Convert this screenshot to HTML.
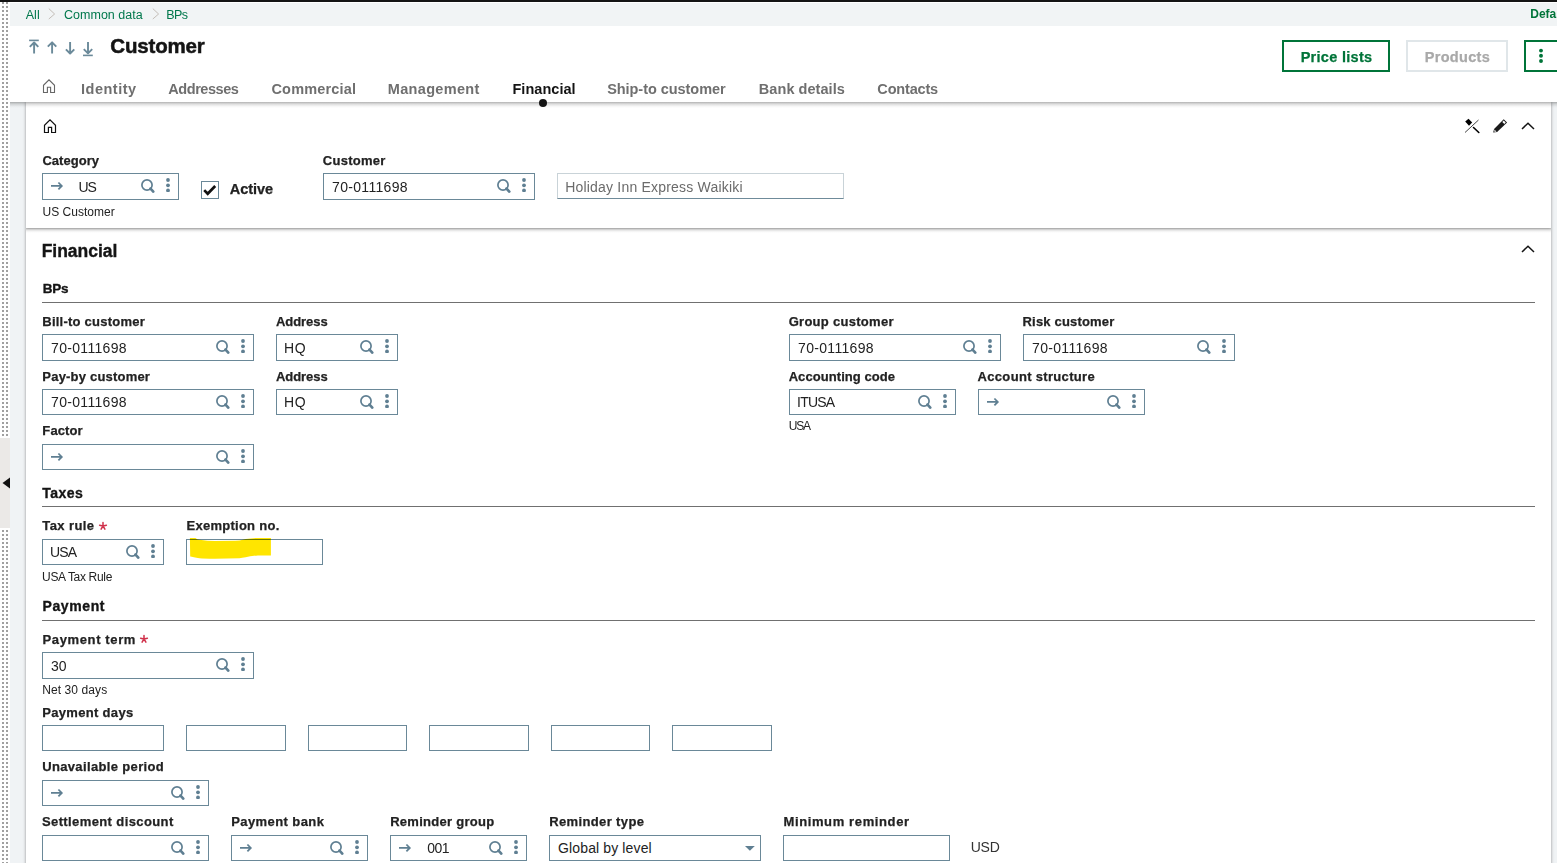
<!DOCTYPE html>
<html><head><meta charset="utf-8">
<style>
*{box-sizing:border-box;margin:0;padding:0}
html,body{width:1557px;height:863px;overflow:hidden;background:#fff;font-family:"Liberation Sans",sans-serif;color:#222}
.a{position:absolute}
.t{position:absolute;line-height:1;white-space:nowrap}
.box{position:absolute;border:1px solid #6a8898;background:#fff}
svg{position:absolute;overflow:visible}
</style></head><body>
<svg width="0" height="0" style="position:absolute">
<defs>
<symbol id="srch" viewBox="0 0 16 16"><circle cx="6" cy="6" r="5.1" fill="none" stroke="#5f7f92" stroke-width="1.7"/><path d="M9.5 9.6 L12.3 12.6" stroke="#5f7f92" stroke-width="2.7" stroke-linecap="round"/></symbol>
<symbol id="keb" viewBox="0 0 4 14"><circle cx="2" cy="2" r="1.9" fill="#5f7f92"/><circle cx="2" cy="7.3" r="1.9" fill="#5f7f92"/><circle cx="2" cy="12.4" r="1.9" fill="#5f7f92"/></symbol>
<symbol id="arr" viewBox="0 0 14 10"><path d="M0 4.9 H10.6 M7.4 1.5 L10.8 4.9 L7.4 8.3" fill="none" stroke="#5f7f92" stroke-width="1.75"/></symbol>
</defs></svg>
<div class="a" style="left:0;top:0;width:1557px;height:2px;background:#141414"></div>
<div class="a" style="left:1px;top:1px;width:8px;height:862px;background-image:radial-gradient(circle at 2px 2px,#a0a0a0 1px,transparent 1.3px);background-size:4px 4px;background-position:0 0"></div>
<div class="a" style="left:10px;top:3px;width:1547px;height:23px;background:#f1f4f5"></div>
<div class="t" style="left:25.65px;top:9.32px;font-size:12.5px;color:#00784c;letter-spacing:0.143px;">All</div>
<div class="t" style="left:64.05px;top:9.32px;font-size:12.5px;color:#00784c;letter-spacing:0.014px;">Common data</div>
<div class="t" style="left:166.15px;top:9.32px;font-size:12.5px;color:#00784c;letter-spacing:-0.537px;">BPs</div>
<div class="t" style="left:1530.25px;top:7.74px;font-size:12px;font-weight:bold;color:#007439;">Default</div>
<svg style="left:48px;top:8px" width="8" height="12"><path d="M0.8 0.6 L6.6 6 L0.8 11" fill="none" stroke="#c4beb8" stroke-width="1"/></svg>
<svg style="left:152px;top:8px" width="8" height="12"><path d="M0.8 0.6 L6.6 6 L0.8 11" fill="none" stroke="#c4beb8" stroke-width="1"/></svg>
<div class="a" style="left:10px;top:102px;width:1547px;height:761px;background:#f0f3f5"></div>
<div class="a" style="left:26px;top:228px;width:1525px;height:700px;background:#fff;box-shadow:0 0 3px rgba(0,0,0,.4)"></div>
<div class="a" style="left:26px;top:102px;width:1525px;height:126px;background:#fff;box-shadow:0 0 3px rgba(0,0,0,.4)"></div>
<div class="a" style="left:26px;top:228px;width:1525px;height:5px;background:linear-gradient(rgba(0,0,0,.22),rgba(0,0,0,.09) 40%,rgba(0,0,0,.02) 80%,rgba(0,0,0,0))"></div>
<div class="a" style="left:10px;top:26px;width:1547px;height:76px;background:#fff"></div>
<div class="a" style="left:10px;top:102px;width:1547px;height:6px;background:linear-gradient(rgba(0,0,0,.30),rgba(0,0,0,.13) 35%,rgba(0,0,0,.03) 75%,rgba(0,0,0,0))"></div>
<svg style="left:26px;top:36px" width="70" height="22" viewBox="0 0 70 22">
<g fill="none" stroke="#6b8a9a" stroke-width="1.9" stroke-linejoin="round">
<path d="M3.1 4.4 H12.8" stroke-width="1.6"/><path d="M8.1 6.6 V17.5 M3.8 10.8 L8.1 6.5 L12.3 10.8"/>
<path d="M26.1 6.3 V17.5 M21.8 10.6 L26.1 6.3 L30.3 10.6"/>
<path d="M44.1 6 V17.5 M39.9 13.3 L44.1 17.5 L48.3 13.3"/>
<path d="M62 6 V17.3 M57.8 13.1 L62 17.3 L66.2 13.1"/><path d="M57 19.4 H66.8" stroke-width="1.6"/>
</g></svg>
<div class="t" style="left:110.35px;top:36.05px;font-size:20.5px;font-weight:bold;color:#141414;letter-spacing:-0.172px;-webkit-text-stroke:0.5px #141414;">Customer</div>
<div class="a" style="left:1282px;top:40px;width:108px;height:32px;border:2px solid #007439"></div>
<div class="t" style="left:1300.65px;top:49.93px;font-size:14.5px;font-weight:bold;color:#007439;letter-spacing:0.295px;-webkit-text-stroke:0.25px #007439;">Price lists</div>
<div class="a" style="left:1406px;top:40px;width:102px;height:32px;border:2px solid #e0e6e9"></div>
<div class="t" style="left:1424.75px;top:49.93px;font-size:14.5px;font-weight:bold;color:#a9a9a9;letter-spacing:0.317px;-webkit-text-stroke:0.25px #a9a9a9;">Products</div>
<div class="a" style="left:1524px;top:40px;width:40px;height:32px;border:2px solid #007439"></div>
<svg style="left:1539px;top:46px" width="4" height="20" viewBox="0 0 4 20"><circle cx="2" cy="4.6" r="1.95" fill="#007439"/><circle cx="2" cy="9.8" r="1.95" fill="#007439"/><circle cx="2" cy="15" r="1.95" fill="#007439"/></svg>
<svg style="left:42px;top:78px" width="14" height="16" viewBox="0 0 14 16"><path d="M1.5 14.5 V7.3 L7 1.8 L12.5 7.3 V14.5 H8.6 V9.3 H5.4 V14.5 Z" fill="none" stroke="#666" stroke-width="1.1"/></svg>
<div class="t" style="left:81.05px;top:82.33px;font-size:14.5px;font-weight:bold;color:#6f6f6f;letter-spacing:0.501px;">Identity</div>
<div class="t" style="left:168.35px;top:82.33px;font-size:14.5px;font-weight:bold;color:#6f6f6f;letter-spacing:-0.461px;">Addresses</div>
<div class="t" style="left:271.45px;top:82.33px;font-size:14.5px;font-weight:bold;color:#6f6f6f;letter-spacing:0.180px;">Commercial</div>
<div class="t" style="left:387.75px;top:82.33px;font-size:14.5px;font-weight:bold;color:#6f6f6f;letter-spacing:0.333px;">Management</div>
<div class="t" style="left:512.45px;top:82.33px;font-size:14.5px;font-weight:bold;color:#141414;letter-spacing:0.035px;">Financial</div>
<div class="t" style="left:607.15px;top:82.33px;font-size:14.5px;font-weight:bold;color:#6f6f6f;letter-spacing:-0.046px;">Ship-to customer</div>
<div class="t" style="left:758.85px;top:82.33px;font-size:14.5px;font-weight:bold;color:#6f6f6f;letter-spacing:0.049px;">Bank details</div>
<div class="t" style="left:877.35px;top:82.33px;font-size:14.5px;font-weight:bold;color:#6f6f6f;letter-spacing:-0.182px;">Contacts</div>
<div class="a" style="left:539px;top:99px;width:8px;height:8px;border-radius:50%;background:#141414"></div>
<svg style="left:43px;top:118px" width="14" height="16" viewBox="0 0 14 16"><path d="M1.5 14.5 V7.3 L7 1.8 L12.5 7.3 V14.5 H8.6 V9.3 H5.4 V14.5 Z" fill="none" stroke="#111" stroke-width="1.2"/></svg>
<svg style="left:1463px;top:117px" width="18" height="18" viewBox="0 0 18 18">
<path d="M2 15.5 L15.5 3" stroke="#444" stroke-width="1"/>
<path d="M2.2 4.5 L5.5 1.8 L9.2 5.6 L6 8.8 Z" fill="#000"/>
<path d="M10.5 10.5 L15.8 15.5" stroke="#000" stroke-width="1.6" stroke-linecap="round"/>
</svg>
<svg style="left:1492px;top:118px" width="16" height="16" viewBox="0 0 16 16">
<path d="M1.2 14.6 L2.1 11.1 L11.7 1.2 L15.1 4.5 L5.1 14 Z" fill="#1a1a1a"/>
<path d="M11.7 2.6 L13.7 4.5 L12.3 5.9 L10.3 4 Z" fill="#fff"/>
<path d="M2.5 11.6 L4.6 13.7 L2.3 13.8 Z" fill="#fff"/>
</svg>
<svg style="left:1521px;top:121.5px" width="14" height="8" viewBox="0 0 14 8"><path d="M1 7 L7 1.2 L13 7" fill="none" stroke="#141414" stroke-width="1.5"/></svg>
<svg style="left:1521px;top:245px" width="14" height="8" viewBox="0 0 14 8"><path d="M1 7 L7 1.2 L13 7" fill="none" stroke="#141414" stroke-width="1.5"/></svg>
<div class="t" style="left:42.45px;top:154.00px;font-size:13px;font-weight:bold;color:#222;letter-spacing:0.026px;-webkit-text-stroke:0.25px #222;">Category</div>
<div class="box" style="left:42px;top:173px;width:137px;height:27px"></div>
<svg style="left:51px;top:181px" width="14" height="10"><use href="#arr"/></svg>
<div class="t" style="left:78.55px;top:179.85px;font-size:14px;color:#222;letter-spacing:-1.210px;">US</div>
<svg style="left:141px;top:179px" width="16" height="16"><use href="#srch"/></svg>
<svg style="left:166px;top:178.3px" width="4" height="14"><use href="#keb"/></svg>
<div class="t" style="left:42.45px;top:205.84px;font-size:12px;color:#222;letter-spacing:0.028px;">US Customer</div>
<div class="a" style="left:201px;top:181px;width:18px;height:18px;border:1.5px solid #6a8898"></div>
<svg style="left:201px;top:181px" width="18" height="18" viewBox="0 0 18 18"><path d="M3.2 9.1 L6.7 12.7 L14.2 5" fill="none" stroke="#111" stroke-width="2.7"/></svg>
<div class="t" style="left:229.75px;top:182.43px;font-size:14.5px;font-weight:bold;color:#222;letter-spacing:-0.031px;-webkit-text-stroke:0.25px #222;">Active</div>
<div class="t" style="left:322.85px;top:153.80px;font-size:13px;font-weight:bold;color:#222;letter-spacing:0.269px;-webkit-text-stroke:0.25px #222;">Customer</div>
<div class="box" style="left:323px;top:173px;width:212px;height:27px"></div>
<div class="t" style="left:332.05px;top:179.85px;font-size:14px;color:#222;letter-spacing:0.325px;">70-0111698</div>
<svg style="left:497px;top:179px" width="16" height="16"><use href="#srch"/></svg>
<svg style="left:522px;top:178.3px" width="4" height="14"><use href="#keb"/></svg>
<div class="a" style="left:557px;top:173px;width:287px;height:26px;border:1px solid #c9d3d8;border-bottom-color:#6f8b9a"></div>
<div class="t" style="left:565.15px;top:179.95px;font-size:14px;color:#6b6b6b;letter-spacing:0.200px;">Holiday Inn Express Waikiki</div>
<div class="t" style="left:41.65px;top:243.19px;font-size:17.5px;font-weight:bold;color:#141414;letter-spacing:-0.024px;-webkit-text-stroke:0.35px #141414;">Financial</div>
<div class="t" style="left:42.65px;top:282.37px;font-size:13.5px;font-weight:bold;color:#141414;letter-spacing:-0.227px;-webkit-text-stroke:0.35px #141414;">BPs</div>
<div class="a" style="left:42px;top:302px;width:1493px;height:1px;background:#707070"></div>
<div class="t" style="left:42.25px;top:314.80px;font-size:13px;font-weight:bold;color:#222;letter-spacing:0.240px;-webkit-text-stroke:0.25px #222;">Bill-to customer</div>
<div class="box" style="left:42px;top:334px;width:212px;height:27px"></div>
<div class="t" style="left:51.05px;top:340.85px;font-size:14px;color:#222;letter-spacing:0.325px;">70-0111698</div>
<svg style="left:216px;top:340px" width="16" height="16"><use href="#srch"/></svg>
<svg style="left:241px;top:339.3px" width="4" height="14"><use href="#keb"/></svg>
<div class="t" style="left:276.05px;top:314.80px;font-size:13px;font-weight:bold;color:#222;letter-spacing:-0.065px;-webkit-text-stroke:0.25px #222;">Address</div>
<div class="box" style="left:276px;top:334px;width:122px;height:27px"></div>
<div class="t" style="left:284.05px;top:340.85px;font-size:14px;color:#222;letter-spacing:0.490px;">HQ</div>
<svg style="left:360px;top:340px" width="16" height="16"><use href="#srch"/></svg>
<svg style="left:385px;top:339.3px" width="4" height="14"><use href="#keb"/></svg>
<div class="t" style="left:788.65px;top:314.80px;font-size:13px;font-weight:bold;color:#222;letter-spacing:0.287px;-webkit-text-stroke:0.25px #222;">Group customer</div>
<div class="box" style="left:789px;top:334px;width:212px;height:27px"></div>
<div class="t" style="left:798.05px;top:340.85px;font-size:14px;color:#222;letter-spacing:0.325px;">70-0111698</div>
<svg style="left:963px;top:340px" width="16" height="16"><use href="#srch"/></svg>
<svg style="left:988px;top:339.3px" width="4" height="14"><use href="#keb"/></svg>
<div class="t" style="left:1022.55px;top:314.80px;font-size:13px;font-weight:bold;color:#222;letter-spacing:0.172px;-webkit-text-stroke:0.25px #222;">Risk customer</div>
<div class="box" style="left:1023px;top:334px;width:212px;height:27px"></div>
<div class="t" style="left:1032.05px;top:340.85px;font-size:14px;color:#222;letter-spacing:0.325px;">70-0111698</div>
<svg style="left:1197px;top:340px" width="16" height="16"><use href="#srch"/></svg>
<svg style="left:1222px;top:339.3px" width="4" height="14"><use href="#keb"/></svg>
<div class="t" style="left:42.35px;top:370.00px;font-size:13px;font-weight:bold;color:#222;letter-spacing:0.200px;-webkit-text-stroke:0.25px #222;">Pay-by customer</div>
<div class="box" style="left:42px;top:389px;width:212px;height:26px"></div>
<div class="t" style="left:51.05px;top:394.85px;font-size:14px;color:#222;letter-spacing:0.325px;">70-0111698</div>
<svg style="left:216px;top:395px" width="16" height="16"><use href="#srch"/></svg>
<svg style="left:241px;top:394.3px" width="4" height="14"><use href="#keb"/></svg>
<div class="t" style="left:276.05px;top:370.00px;font-size:13px;font-weight:bold;color:#222;letter-spacing:-0.065px;-webkit-text-stroke:0.25px #222;">Address</div>
<div class="box" style="left:276px;top:389px;width:122px;height:26px"></div>
<div class="t" style="left:284.05px;top:394.85px;font-size:14px;color:#222;letter-spacing:0.490px;">HQ</div>
<svg style="left:360px;top:395px" width="16" height="16"><use href="#srch"/></svg>
<svg style="left:385px;top:394.3px" width="4" height="14"><use href="#keb"/></svg>
<div class="t" style="left:788.65px;top:370.00px;font-size:13px;font-weight:bold;color:#222;letter-spacing:0.070px;-webkit-text-stroke:0.25px #222;">Accounting code</div>
<div class="box" style="left:789px;top:389px;width:167px;height:26px"></div>
<div class="t" style="left:797.05px;top:394.85px;font-size:14px;color:#222;letter-spacing:-0.797px;">ITUSA</div>
<svg style="left:918px;top:395px" width="16" height="16"><use href="#srch"/></svg>
<svg style="left:943px;top:394.3px" width="4" height="14"><use href="#keb"/></svg>
<div class="t" style="left:977.55px;top:370.00px;font-size:13px;font-weight:bold;color:#222;letter-spacing:0.323px;-webkit-text-stroke:0.25px #222;">Account structure</div>
<div class="box" style="left:978px;top:389px;width:167px;height:26px"></div>
<svg style="left:987px;top:397px" width="14" height="10"><use href="#arr"/></svg>
<svg style="left:1107px;top:395px" width="16" height="16"><use href="#srch"/></svg>
<svg style="left:1132px;top:394.3px" width="4" height="14"><use href="#keb"/></svg>
<div class="t" style="left:788.75px;top:420.34px;font-size:12px;color:#222;letter-spacing:-1.185px;">USA</div>
<div class="t" style="left:42.35px;top:424.20px;font-size:13px;font-weight:bold;color:#222;letter-spacing:0.106px;-webkit-text-stroke:0.25px #222;">Factor</div>
<div class="box" style="left:42px;top:444px;width:212px;height:26px"></div>
<svg style="left:51px;top:452px" width="14" height="10"><use href="#arr"/></svg>
<svg style="left:216px;top:450px" width="16" height="16"><use href="#srch"/></svg>
<svg style="left:241px;top:449.3px" width="4" height="14"><use href="#keb"/></svg>
<div class="t" style="left:42.35px;top:485.95px;font-size:14px;font-weight:bold;color:#141414;letter-spacing:0.432px;-webkit-text-stroke:0.35px #141414;">Taxes</div>
<div class="a" style="left:42px;top:506px;width:1493px;height:1px;background:#707070"></div>
<div class="t" style="left:42.35px;top:518.90px;font-size:13px;font-weight:bold;color:#222;letter-spacing:0.406px;-webkit-text-stroke:0.25px #222;">Tax rule</div>
<svg style="left:98.1px;top:520.8px" width="10" height="10" viewBox="-5 -5 10 10"><path d="M0 -3.4 V0 M-3.4 -0.8 L0 0 L3.4 -0.8 M-1.9 3.1 L0 0 L1.9 3.1" fill="none" stroke="#d0304a" stroke-width="1.5" stroke-linecap="round" stroke-linejoin="round"/></svg>
<div class="box" style="left:42px;top:539px;width:122px;height:26px"></div>
<div class="t" style="left:50.05px;top:544.85px;font-size:14px;color:#222;letter-spacing:-0.924px;">USA</div>
<svg style="left:126px;top:545px" width="16" height="16"><use href="#srch"/></svg>
<svg style="left:151px;top:544.3px" width="4" height="14"><use href="#keb"/></svg>
<div class="t" style="left:186.45px;top:518.90px;font-size:13px;font-weight:bold;color:#222;letter-spacing:0.271px;-webkit-text-stroke:0.25px #222;">Exemption no.</div>
<div class="box" style="left:186px;top:539px;width:137px;height:26px"></div>
<svg style="left:184px;top:532px;mix-blend-mode:multiply" width="96" height="34" viewBox="0 0 96 34"><path d="M5.9 5.9 L11.4 5.9 Q13 7.4 15.4 7.7 Q24 8.9 30.8 8.9 Q48 8.9 55.5 8.6 Q59 8 61.7 7.1 Q68 5.9 74 5.9 L86.9 5.9 L86.9 23.4 L74 23.4 Q66 23.8 61.7 25.3 Q58 26 55.5 26.2 L30.8 26.8 Q20 26.5 15.4 26.2 Q9 25 6.2 24.4 Z" fill="#ffe500"/></svg>
<div class="t" style="left:42.05px;top:570.84px;font-size:12px;color:#222;letter-spacing:-0.320px;">USA Tax Rule</div>
<div class="t" style="left:42.55px;top:599.15px;font-size:14px;font-weight:bold;color:#141414;letter-spacing:0.601px;-webkit-text-stroke:0.35px #141414;">Payment</div>
<div class="a" style="left:42px;top:620px;width:1493px;height:1px;background:#707070"></div>
<div class="t" style="left:42.55px;top:632.90px;font-size:13px;font-weight:bold;color:#222;letter-spacing:0.625px;-webkit-text-stroke:0.25px #222;">Payment term</div>
<svg style="left:139.1px;top:634.3px" width="10" height="10" viewBox="-5 -5 10 10"><path d="M0 -3.4 V0 M-3.4 -0.8 L0 0 L3.4 -0.8 M-1.9 3.1 L0 0 L1.9 3.1" fill="none" stroke="#d0304a" stroke-width="1.5" stroke-linecap="round" stroke-linejoin="round"/></svg>
<div class="box" style="left:42px;top:652px;width:212px;height:27px"></div>
<div class="t" style="left:51.05px;top:658.85px;font-size:14px;color:#222;letter-spacing:-0.186px;">30</div>
<svg style="left:216px;top:658px" width="16" height="16"><use href="#srch"/></svg>
<svg style="left:241px;top:657.3px" width="4" height="14"><use href="#keb"/></svg>
<div class="t" style="left:42.15px;top:683.64px;font-size:12px;color:#222;letter-spacing:0.096px;">Net 30 days</div>
<div class="t" style="left:42.15px;top:706.20px;font-size:13px;font-weight:bold;color:#222;letter-spacing:0.327px;-webkit-text-stroke:0.25px #222;">Payment days</div>
<div class="box" style="left:42px;top:725px;width:122px;height:26px"></div>
<div class="box" style="left:186px;top:725px;width:100px;height:26px"></div>
<div class="box" style="left:308px;top:725px;width:99px;height:26px"></div>
<div class="box" style="left:429px;top:725px;width:100px;height:26px"></div>
<div class="box" style="left:551px;top:725px;width:99px;height:26px"></div>
<div class="box" style="left:672px;top:725px;width:100px;height:26px"></div>
<div class="t" style="left:42.15px;top:760.20px;font-size:13px;font-weight:bold;color:#222;letter-spacing:0.356px;-webkit-text-stroke:0.25px #222;">Unavailable period</div>
<div class="box" style="left:42px;top:780px;width:167px;height:26px"></div>
<svg style="left:51px;top:788px" width="14" height="10"><use href="#arr"/></svg>
<svg style="left:171px;top:786px" width="16" height="16"><use href="#srch"/></svg>
<svg style="left:196px;top:785.3px" width="4" height="14"><use href="#keb"/></svg>
<div class="t" style="left:41.95px;top:814.90px;font-size:13px;font-weight:bold;color:#222;letter-spacing:0.394px;-webkit-text-stroke:0.25px #222;">Settlement discount</div>
<div class="box" style="left:42px;top:835px;width:167px;height:26px"></div>
<svg style="left:171px;top:841px" width="16" height="16"><use href="#srch"/></svg>
<svg style="left:196px;top:840.3px" width="4" height="14"><use href="#keb"/></svg>
<div class="t" style="left:231.25px;top:814.90px;font-size:13px;font-weight:bold;color:#222;letter-spacing:0.408px;-webkit-text-stroke:0.25px #222;">Payment bank</div>
<div class="box" style="left:231px;top:835px;width:137px;height:26px"></div>
<svg style="left:240px;top:843px" width="14" height="10"><use href="#arr"/></svg>
<svg style="left:330px;top:841px" width="16" height="16"><use href="#srch"/></svg>
<svg style="left:355px;top:840.3px" width="4" height="14"><use href="#keb"/></svg>
<div class="t" style="left:390.15px;top:814.90px;font-size:13px;font-weight:bold;color:#222;letter-spacing:0.280px;-webkit-text-stroke:0.25px #222;">Reminder group</div>
<div class="box" style="left:390px;top:835px;width:137px;height:26px"></div>
<svg style="left:399px;top:843px" width="14" height="10"><use href="#arr"/></svg>
<div class="t" style="left:427.15px;top:840.85px;font-size:14px;color:#222;letter-spacing:-0.536px;">001</div>
<svg style="left:489px;top:841px" width="16" height="16"><use href="#srch"/></svg>
<svg style="left:514px;top:840.3px" width="4" height="14"><use href="#keb"/></svg>
<div class="t" style="left:549.15px;top:814.90px;font-size:13px;font-weight:bold;color:#222;letter-spacing:0.377px;-webkit-text-stroke:0.25px #222;">Reminder type</div>
<div class="box" style="left:549px;top:835px;width:212px;height:26px"></div>
<div class="t" style="left:558.05px;top:840.85px;font-size:14px;color:#222;letter-spacing:0.127px;">Global by level</div>
<svg style="left:745px;top:845.6px" width="10" height="5" viewBox="0 0 10 5"><path d="M0 0 H9.8 L4.9 4.8 Z" fill="#5f7f92"/></svg>
<div class="t" style="left:783.45px;top:814.90px;font-size:13px;font-weight:bold;color:#222;letter-spacing:0.624px;-webkit-text-stroke:0.25px #222;">Minimum reminder</div>
<div class="box" style="left:783px;top:835px;width:167px;height:26px"></div>
<div class="t" style="left:970.65px;top:840.15px;font-size:14px;color:#333;letter-spacing:-0.224px;">USD</div>
<div class="a" style="left:0;top:438px;width:10px;height:90px;background:#ebe9e7"></div>
<svg style="left:2px;top:477px" width="8" height="12" viewBox="0 0 8 12"><path d="M0.5 6 L8 0.5 V11.5 Z" fill="#111"/></svg>
</body></html>
